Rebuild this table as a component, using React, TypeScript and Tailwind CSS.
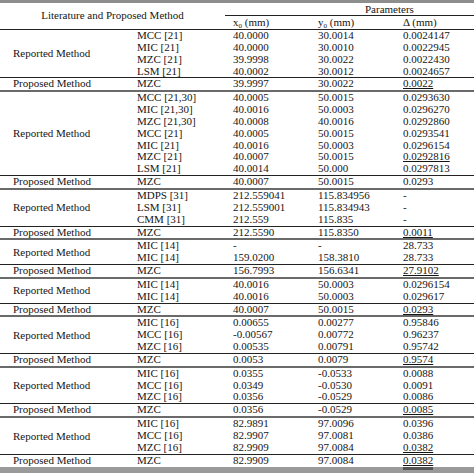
type Row = { m: string; x: string; y: string; d: string; u?: boolean }
type Group = { reported: Row[]; proposed: Row }

const groups: Group[] = [
  {
    reported: [
      { m: "MCC [21]", x: "40.0000", y: "30.0014", d: "0.0024147" },
      { m: "MIC [21]", x: "40.0000", y: "30.0010", d: "0.0022945" },
      { m: "MZC [21]", x: "39.9998", y: "30.0022", d: "0.0022430" },
      { m: "LSM [21]", x: "40.0002", y: "30.0012", d: "0.0024657" },
    ],
    proposed: { m: "MZC", x: "39.9997", y: "30.0022", d: "0.0022", u: true },
  },
  {
    reported: [
      { m: "MCC [21,30]", x: "40.0005", y: "50.0015", d: "0.0293630" },
      { m: "MIC [21,30]", x: "40.0016", y: "50.0003", d: "0.0296270" },
      { m: "MZC [21,30]", x: "40.0008", y: "40.0016", d: "0.0292860" },
      { m: "MCC [21]", x: "40.0005", y: "50.0015", d: "0.0293541" },
      { m: "MIC [21]", x: "40.0016", y: "50.0003", d: "0.0296154" },
      { m: "MZC [21]", x: "40.0007", y: "50.0015", d: "0.0292816", u: true },
      { m: "LSM [21]", x: "40.0014", y: "50.000", d: "0.0297813" },
    ],
    proposed: { m: "MZC", x: "40.0007", y: "50.0015", d: "0.0293" },
  },
  {
    reported: [
      { m: "MDPS [31]", x: "212.559041", y: "115.834956", d: "-" },
      { m: "LSM [31]", x: "212.559001", y: "115.834943", d: "-" },
      { m: "CMM [31]", x: "212.559", y: "115.835", d: "-" },
    ],
    proposed: { m: "MZC", x: "212.5590", y: "115.8350", d: "0.0011", u: true },
  },
  {
    reported: [
      { m: "MIC [14]", x: "-", y: "-", d: "28.733" },
      { m: "MIC [14]", x: "159.0200", y: "158.3810", d: "28.733" },
    ],
    proposed: { m: "MZC", x: "156.7993", y: "156.6341", d: "27.9102", u: true },
  },
  {
    reported: [
      { m: "MIC [14]", x: "40.0016", y: "50.0003", d: "0.0296154" },
      { m: "MIC [14]", x: "40.0016", y: "50.0003", d: "0.029617" },
    ],
    proposed: { m: "MZC", x: "40.0007", y: "50.0015", d: "0.0293", u: true },
  },
  {
    reported: [
      { m: "MIC [16]", x: "0.00655", y: "0.00277", d: "0.95846" },
      { m: "MCC [16]", x: "-0.00567", y: "0.00772", d: "0.96237" },
      { m: "MZC [16]", x: "0.00535", y: "0.00791", d: "0.95742" },
    ],
    proposed: { m: "MZC", x: "0.0053", y: "0.0079", d: "0.9574", u: true },
  },
  {
    reported: [
      { m: "MIC [16]", x: "0.0355", y: "-0.0533", d: "0.0088" },
      { m: "MCC [16]", x: "0.0349", y: "-0.0530", d: "0.0091" },
      { m: "MZC [16]", x: "0.0356", y: "-0.0529", d: "0.0086" },
    ],
    proposed: { m: "MZC", x: "0.0356", y: "-0.0529", d: "0.0085", u: true },
  },
  {
    reported: [
      { m: "MIC [16]", x: "82.9891", y: "97.0096", d: "0.0396" },
      { m: "MCC [16]", x: "82.9907", y: "97.0081", d: "0.0386" },
      { m: "MZC [16]", x: "82.9909", y: "97.0084", d: "0.0382", u: true },
    ],
    proposed: { m: "MZC", x: "82.9909", y: "97.0084", d: "0.0382", u: true },
  },
]

function Cells({ row }: { row: Row }) {
  return (
    <div className="flex h-[11.85px] leading-[11.85px]">
      <div className="w-[96px] pl-[8px]">{row.m}</div>
      <div className="w-[85px] pl-[8px]">{row.x}</div>
      <div className="w-[85px] pl-[8px]">{row.y}</div>
      <div className="flex-1 pl-[8px]">
        <span className={row.u ? "underline underline-offset-[1px]" : ""}>{row.d}</span>
      </div>
    </div>
  )
}

export default function App() {
  return (
    <div
      className="w-[474px] h-[474px] overflow-hidden bg-white text-[11px] text-[#151515]"
      style={{ fontFamily: '"Liberation Serif", "Times New Roman", serif' }}
    >
      <div className="h-[3px] bg-[#8e8e8e]" />

      {/* header */}
      <div className="flex h-[27px] border-b border-[#222]">
        <div className="w-[225px] flex items-center justify-center pb-[2px]">Literature and Proposed Method</div>
        <div className="flex-1 flex flex-col">
          <div className="h-[13px] leading-[12px] border-b border-[#222] pl-[140px]">Parameters</div>
          <div className="flex h-[13px] leading-[13px]">
            <div className="w-[85px] pl-[8px]">
              x<sub className="text-[7px]">0</sub> (mm)
            </div>
            <div className="w-[85px] pl-[8px]">
              y<sub className="text-[7px]">0</sub> (mm)
            </div>
            <div className="flex-1 pl-[8px]">Δ (mm)</div>
          </div>
        </div>
      </div>

      {groups.map((g, i) => (
        <div key={i}>
          <div className="flex border-b border-[#222]">
            <div className="w-[129px] pl-[13px] flex items-center">Reported Method</div>
            <div className="flex-1">
              {g.reported.map((r, j) => (
                <Cells key={j} row={r} />
              ))}
            </div>
          </div>
          <div className={i === groups.length - 1 ? "flex" : "flex border-b-2 border-[#6a6a6a]"}>
            <div className="w-[129px] pl-[13px] leading-[11.85px]">Proposed Method</div>
            <div className="flex-1">
              <Cells row={g.proposed} />
            </div>
          </div>
        </div>
      ))}

      <div className="flex h-[6px] bg-[#9a9a9a]">
        <div className="ml-[403px] w-[30px] h-[3px] bg-[#555]" />
      </div>
    </div>
  )
}
